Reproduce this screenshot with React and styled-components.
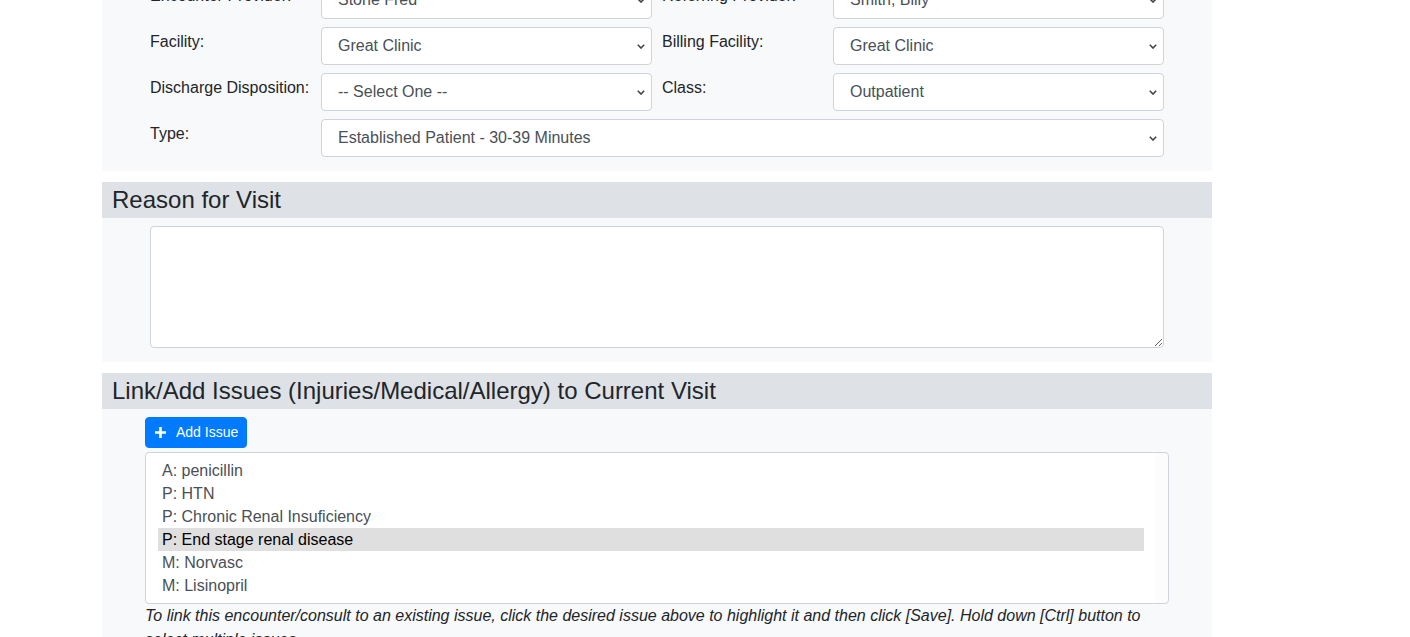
import React from 'react'
import styled, { createGlobalStyle } from 'styled-components'

const GlobalStyle = createGlobalStyle`
  html, body {
    margin: 0;
    padding: 0;
    background: #fff;
    overflow: hidden;
  }
  body {
    font-family: "Liberation Sans", Arial, sans-serif;
    font-size: 16px;
    line-height: 1.5;
    color: #212529;
  }
  * {
    box-sizing: border-box;
  }
`

const chevron =
  "url(\"data:image/svg+xml,%3Csvg xmlns='http://www.w3.org/2000/svg' width='8' height='5' viewBox='0 0 8 5'%3E%3Cpath d='M0.8 0.8l3.2 3.2L7.2 0.8' fill='none' stroke='%23444' stroke-width='1.6'/%3E%3C/svg%3E\")"

const Page = styled.div`
  width: 1110px;
  margin: -27px 0 0 102px;
  display: flex;
  flex-direction: column;
  gap: 11px;
`

const Panel = styled.section`
  background-color: #f8f9fa;
  padding: 8px 48px 14px;
`

const FieldGrid = styled.div`
  display: grid;
  grid-template-columns: 171px 331px 181px 331px;
  row-gap: 8px;
`

const Label = styled.label`
  padding-top: 3px;
  padding-left: ${props => (props.$right ? '10px' : '0')};
  line-height: 24px;
  color: #212529;
`

const Select = styled.select`
  grid-column: ${props => (props.$wide ? '2 / -1' : 'auto')};
  appearance: none;
  height: 38px;
  width: 100%;
  padding: 0 30px 1px 16px;
  font-family: inherit;
  font-size: 16px;
  color: #495057;
  background: #fff ${chevron} no-repeat right 6px center;
  border: 1px solid #ced4da;
  border-radius: 4px;
`

const Section = styled.section`
  display: flex;
  flex-direction: column;
  background-color: #f8f9fa;
`

const SectionTitle = styled.h2`
  margin: 0;
  height: 36px;
  padding: 0 10px;
  background-color: #dee2e6;
  font-size: 24px;
  font-weight: 400;
  line-height: 36px;
  color: #212529;
`

const SectionBody = styled.div`
  display: flex;
  flex-direction: column;
  align-items: flex-start;
  padding: ${props => props.$pad};
`

const TextArea = styled.textarea`
  display: block;
  width: 100%;
  height: 122px;
  border: 1px solid #ced4da;
  border-radius: 4px;
  background: #fff;
  font-family: inherit;
  font-size: 16px;
`

const AddButton = styled.button`
  display: flex;
  align-items: center;
  gap: 10px;
  height: 31px;
  padding: 4px 8px 4px 9px;
  border: 1px solid #007bff;
  border-radius: 4px;
  background-color: #007bff;
  color: #fff;
  font-family: inherit;
  font-size: 14px;
  line-height: 21px;
`

const PlusIcon = styled.svg`
  width: 11px;
  height: 11px;
`

const IssueList = styled.ul`
  list-style: none;
  margin: 4px 0 0;
  width: 1024px;
  padding: 6px 24px 6px 12px;
  background: linear-gradient(to right, #fff calc(100% - 13px), #fcfcfc calc(100% - 13px));
  border: 1px solid #ced4da;
  border-radius: 4px;
`

const IssueItem = styled.li`
  height: 23px;
  line-height: 23px;
  padding: 0 4px;
  color: ${props => (props.$selected ? '#000' : '#495057')};
  background-color: ${props => (props.$selected ? '#dfdfdf' : 'transparent')};
`

const Note = styled.p`
  margin: 0;
  width: 1024px;
  font-style: italic;
  line-height: 24px;
  color: #212529;
`

const issues = [
  'A: penicillin',
  'P: HTN',
  'P: Chronic Renal Insuficiency',
  'P: End stage renal disease',
  'M: Norvasc',
  'M: Lisinopril',
]

const App = () => {
  return (
    <>
      <GlobalStyle />
      <Page>
        <Panel>
          <FieldGrid>
            <Label>Encounter Provider:</Label>
            <Select defaultValue="Stone Fred">
              <option>Stone Fred</option>
            </Select>
            <Label $right>Referring Provider:</Label>
            <Select defaultValue="Smith, Billy">
              <option>Smith, Billy</option>
            </Select>

            <Label>Facility:</Label>
            <Select>
              <option>Great Clinic</option>
            </Select>
            <Label $right>Billing Facility:</Label>
            <Select>
              <option>Great Clinic</option>
            </Select>

            <Label>Discharge Disposition:</Label>
            <Select>
              <option>-- Select One --</option>
            </Select>
            <Label $right>Class:</Label>
            <Select>
              <option>Outpatient</option>
            </Select>

            <Label>Type:</Label>
            <Select $wide>
              <option>Established Patient - 30-39 Minutes</option>
            </Select>
          </FieldGrid>
        </Panel>

        <Section>
          <SectionTitle>Reason for Visit</SectionTitle>
          <SectionBody $pad="8px 48px 14px">
            <TextArea />
          </SectionBody>
        </Section>

        <Section>
          <SectionTitle>Link/Add Issues (Injuries/Medical/Allergy) to Current Visit</SectionTitle>
          <SectionBody $pad="8px 43px 14px">
            <AddButton>
              <PlusIcon viewBox="0 0 11 11">
                <path d="M5.5 0v11M0 5.5h11" stroke="#fff" strokeWidth="2.6" />
              </PlusIcon>
              Add Issue
            </AddButton>
            <IssueList>
              {issues.map((issue, i) => (
                <IssueItem key={issue} $selected={i === 3}>
                  {issue}
                </IssueItem>
              ))}
            </IssueList>
            <Note>
              To link this encounter/consult to an existing issue, click the desired issue above to
              highlight it and then click [Save]. Hold down [Ctrl] button to select multiple issues.
            </Note>
          </SectionBody>
        </Section>
      </Page>
    </>
  )
}

export default App
